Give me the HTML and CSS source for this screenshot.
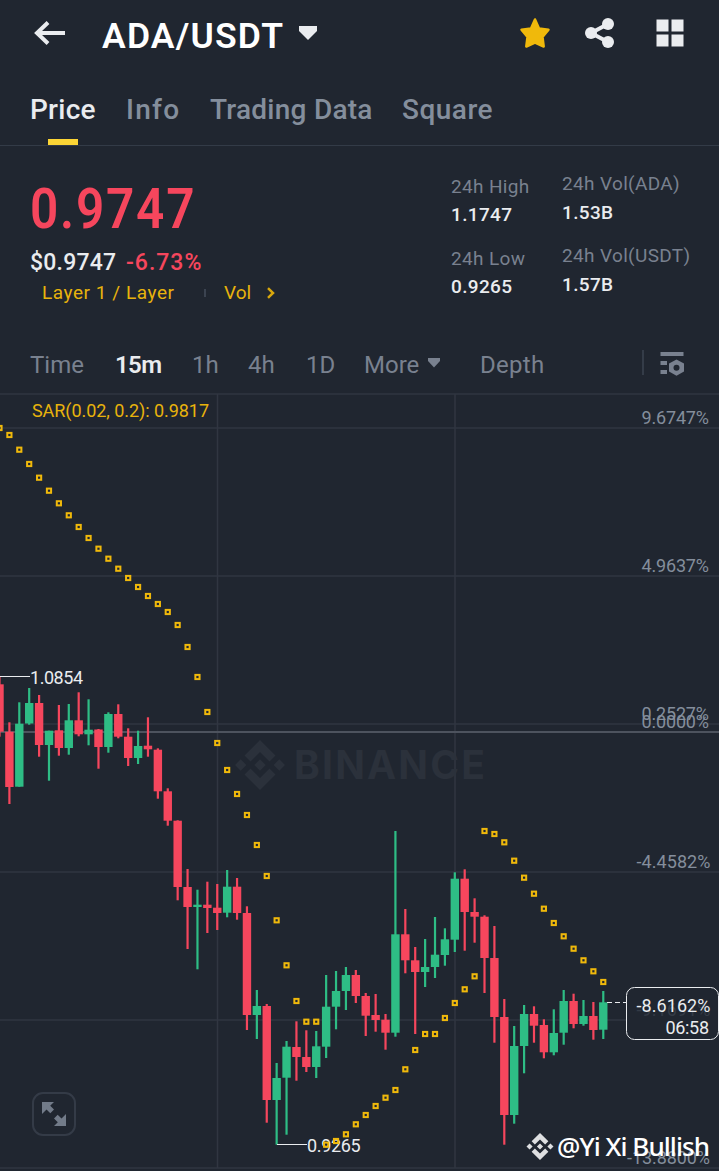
FILE: index.html
```html
<!DOCTYPE html>
<html lang="en">
<head>
<meta charset="utf-8">
<title>ADA/USDT</title>
<link rel="stylesheet" href="styles.css">
</head>
<body>
<header class="topbar">
  <svg class="back" width="32" height="26" viewBox="0 0 32 26"><path d="M31 13H3M14 2.500L3 13l11 10.500" fill="none" stroke="#eaecef" stroke-width="4"/></svg>
  <h1 class="pair">ADA/USDT</h1>
  <svg class="pair-arrow" width="18" height="14" viewBox="0 0 18 14"><path d="M0 0H18V5L9 14L0 5Z" fill="#eaecef"/></svg>
  <svg class="star" width="32" height="32" viewBox="0 0 32 32"><path d="M16 2.500L20 11.500L29.500 12.700L23.500 20L24.700 29.500L16 25.500L7.300 29.500L8.500 20L2.500 12.700L12 11.500Z" fill="#f0b90b" stroke="#f0b90b" stroke-width="2.500" stroke-linejoin="round"/></svg>
  <svg class="share" width="30" height="32" viewBox="0 0 30 32"><path d="M23 7L6 16l17 9" fill="none" stroke="#eaecef" stroke-width="4"/><g fill="#eaecef"><circle cx="23" cy="7" r="6"/><circle cx="6" cy="16" r="6"/><circle cx="23" cy="25" r="6"/></g></svg>
  <svg class="apps" width="28" height="28" viewBox="0 0 28 28"><path d="M.5.5h12v12H.5zM15.500.5h12v12h-12zM.5 15.500h12v12H.5zM15.500 15.500h12v12h-12z" fill="#eaecef"/></svg>
</header>
<nav class="tabs">
  <span class="tab tab-price active">Price</span>
  <span class="tab tab-info">Info</span>
  <span class="tab tab-data">Trading Data</span>
  <span class="tab tab-square">Square</span>
</nav>
<section class="summary">
  <div class="quote">
    <div class="last">0.9747</div>
    <div class="sub"><span class="usd">$0.9747</span><span class="change">-6.73%</span></div>
    <div class="tags"><span class="layer">Layer 1 / Layer</span><i class="tag-sep"></i><span class="vol">Vol</span><svg class="chev" width="8" height="12" viewBox="0 0 8 12"><path d="M1 1.200L6 6L1 10.800" fill="none" stroke="#d8a70d" stroke-width="2.500"/></svg></div>
  </div>
  <dl class="stats stats-range"><dt>24h High</dt><dd>1.1747</dd><dt>24h Low</dt><dd>0.9265</dd></dl>
  <dl class="stats stats-volume"><dt>24h Vol(ADA)</dt><dd>1.53B</dd><dt class="volume-usdt">24h Vol(USDT)</dt><dd>1.57B</dd></dl>
</section>
<nav class="intervals">
  <span class="iv iv-time">Time</span><span class="iv iv-15m selected">15m</span><span class="iv iv-1h">1h</span><span class="iv iv-4h">4h</span><span class="iv iv-1d">1D</span><span class="iv iv-more">More</span>
  <svg class="more-arrow" width="12" height="10" viewBox="0 0 12 10"><path d="M0 0H12V3L6 9.500L0 3Z" fill="#79818f"/></svg>
  <span class="iv iv-depth">Depth</span><i class="iv-sep"></i>
  <svg class="settings" width="24" height="25" viewBox="0 0 24 25"><path d="M.5 1h23v4H.5zM.5 10h6.500v4H.5zM.5 19h6.500v4H.5z" fill="#79818f"/><path fill-rule="evenodd" d="M16.500 8.500L24 12.500V20.500L16.500 24.800L9 20.500V12.500ZM16.500 13.700a3 3 0 100 6 3 3 0 000-6z" fill="#79818f"/></svg>
</nav>
<main class="chart">
  <svg class="plot" id="plot" width="719" height="778" viewBox="0 393 719 778">
    <g class="grid" id="grid"></g>
    <path class="zero" d="M0 732H719"/>
    <g class="watermark">
      <g transform="translate(235 740)"><path d="M25 0L40.500 15.500L34.500 21.500L25 12L15.500 21.500L9.500 15.500ZM9.500 34.500L15.500 28.500L25 38L34.500 28.500L40.500 34.500L25 50ZM0 25L5.700 19.300L11.400 25L5.700 30.700ZM38.600 25L44.300 19.300L50 25L44.300 30.700ZM19.300 25L25 19.300L30.700 25L25 30.700Z"/></g>
      <text x="294" y="779" textLength="191">BINANCE</text>
    </g>
    <g class="scale">
      <text x="641.500" y="424" textLength="67.500">9.6747%</text>
      <text x="641.500" y="572" textLength="67.500">4.9637%</text>
      <text x="641.500" y="720" textLength="67.500">0.2527%</text>
      <text x="641.500" y="728" textLength="67.500">0.0000%</text>
      <text x="636.500" y="868" textLength="74">-4.4582%</text>
      <text x="627" y="1164" textLength="83">-13.8800%</text>
    </g>
    <text class="sar-label" x="32" y="417" textLength="177">SAR(0.02, 0.2): 0.9817</text>
    <g id="candles"></g>
    <g class="marks"><path d="M0 676.500H30M277 1144.500H307"/><text x="30" y="684" textLength="53">1.0854</text><text x="307" y="1152" textLength="53.500">0.9265</text></g>
    <g class="sar" id="sar"></g>
    <path class="last-line" d="M607 1002.500H626"/>
    <g class="last-tag"><rect x="626.500" y="987.500" width="92" height="52" rx="8"/><text class="ghost" x="636.500" y="1016" textLength="74">-9.1691%</text><text x="636.500" y="1012" textLength="74">-8.6162%</text><text x="665.500" y="1034" textLength="43.500">06:58</text></g>
    <g class="expand"><rect x="33" y="1093" width="42" height="42" rx="10"/><path d="M42 1102H54L50.200 1105.800L54 1109.600L50.300 1113.300L46.500 1109.500L42 1114ZM66 1126H54L57.800 1122.200L54 1118.400L57.700 1114.700L61.500 1118.500L66 1114Z"/></g>
    <g class="author"><g transform="translate(526.500 1133) scale(.54)"><path d="M25 0L40.500 15.500L34.500 21.500L25 12L15.500 21.500L9.500 15.500ZM9.500 34.500L15.500 28.500L25 38L34.500 28.500L40.500 34.500L25 50ZM0 25L5.700 19.300L11.400 25L5.700 30.700ZM38.600 25L44.300 19.300L50 25L44.300 30.700ZM19.300 25L25 19.300L30.700 25L25 30.700Z"/></g><text x="557" y="1156" textLength="153">@Yi Xi Bullish</text></g>
  </svg>
</main>
<script src="chart.js"></script>
</body>
</html>
```

FILE: styles.css
```css
* { box-sizing: border-box; }
body { margin: 0; width: 719px; height: 1171px; overflow: hidden; background: #202630; color: #eaecef; font-family: Roboto, "Noto Sans", sans-serif; }
svg { display: block; flex: none; }
.topbar { display: flex; height: 68px; align-items: center; padding-left: 34px; }
.back { margin-top: -2px; }
.pair { margin: 3px 0 0 36px; width: 181px; font-size: 35.5px; line-height: 40px; font-weight: 600; letter-spacing: 1.2px; color: #fff; white-space: nowrap; }
.pair-arrow { margin-left: 16px; margin-top: -2px; }
.star { margin-left: 202px; margin-top: -2px; }
.share { margin-left: 34px; margin-top: -2px; }
.apps { margin-left: 41px; margin-top: -2px; }
.tabs { display: flex; height: 78px; padding-left: 30px; border-bottom: 1px solid #333b47; font-size: 28px; font-weight: 500; line-height: 34px; color: #848e9c; }
.tab { padding-top: 25px; white-space: nowrap; letter-spacing: .25px; }
.tab-price { width: 96px; background: linear-gradient(#fcd535, #fcd535) 18px 71px / 30px 6px no-repeat; }
.tab-info { width: 84px; letter-spacing: 1.3px; }
.tab-data { width: 192px; }
.tab-square { letter-spacing: .5px; }
.active { color: #eaecef; }
.summary { display: flex; height: 190px; }
.quote { width: 451px; padding-left: 30px; }
.last { margin-top: 32px; height: 62px; font-size: 56px; line-height: 62px; font-weight: 600; letter-spacing: 2px; color: #f6465d; transform: scaleX(.885); transform-origin: 0 50%; }
.sub { display: flex; height: 30px; margin-top: 8px; font-size: 23px; line-height: 30px; font-weight: 500; letter-spacing: .2px; }
.usd { width: 96px; }
.change { color: #f6465d; letter-spacing: 1px; }
.tags { display: flex; align-items: center; height: 26px; margin-top: 2px; padding-left: 12px; font-size: 19px; line-height: 26px; color: #e8b30c; }
.layer { width: 162px; letter-spacing: .55px; }
.tag-sep { width: 2px; height: 8px; background: #3b4350; }
.vol { margin-left: 18px; width: 43px; }
.stats { margin: 27px 0 0; width: 111px; font-size: 19px; line-height: 28px; letter-spacing: .35px; white-space: nowrap; }
.stats dt { color: #79818f; height: 28px; }
.stats dd { margin: 0 0 16px; height: 28px; font-weight: 500; }
.stats-volume { margin-top: 24px; }
.stats-volume dd { padding-top: 1px; }
.intervals { display: flex; height: 57px; padding: 14px 0 0 30px; font-size: 24px; line-height: 30px; color: #79818f; }
.iv-time { width: 85px; }
.iv-15m { width: 77px; letter-spacing: -.6px; }
.iv-1h { width: 56px; }
.iv-4h { width: 58px; }
.iv-1d { width: 58px; }
.iv-more { width: 64px; }
.more-arrow { margin-top: 8px; }
.iv-depth { margin-left: 40px; width: 162px; letter-spacing: .3px; }
.iv-sep { width: 2px; height: 25px; background: #343c48; }
.settings { margin: 1px 0 0 16px; }
.selected { color: #eaecef; font-weight: 600; }
.grid path { stroke: #2b313c; stroke-width: 2; }
.grid .vertical { stroke: #303641; stroke-width: 1.5; }
.zero { stroke: #4d535e; stroke-width: 2; }
.watermark { fill: #2b313b; font: 700 39px Inter, sans-serif; }
.scale { fill: #848e9c; font-size: 18px; }
.sar-label { fill: #e8b30c; font-size: 18px; }
.candle-up { fill: #2ebd85; }
.candle-down { fill: #f6465d; }
.marks { fill: #eaecef; font-size: 18px; }
.marks path { stroke: #eaecef; }
.sar rect { fill: none; stroke: #f0b90b; stroke-width: 2; }
.last-line { stroke: #eaecef; stroke-dasharray: 5 3; }
.last-tag { fill: #eaecef; font-size: 18px; }
.last-tag rect { fill: #202630; stroke: #eaecef; }
.last-tag .ghost { fill: #343b46; }
.expand rect { fill: none; stroke: #343b47; stroke-width: 2; }
.expand path { fill: #727b89; }
.author { fill: #dedfe1; }
.author text { fill: #fff; font: 500 26px "Noto Sans", sans-serif; }
```

FILE: chart.js
```js
const NS = "http://www.w3.org/2000/svg";
const X0 = -0.5, STEP = 9.898;

function add(parent, name, attrs) {
  const el = document.createElementNS(NS, name);
  for (const key in attrs) el.setAttribute(key, attrs[key]);
  document.getElementById(parent).appendChild(el);
}

[394, 428, 576, 724, 872, 1020, 1168].forEach(y => add("grid", "path", { d: `M0 ${y}H719` }));
[217.5, 455].forEach(x => add("grid", "path", { class: "vertical", d: `M${x} 394V1168` }));

// direction (1 = up), high, body top, body bottom, low
const candles = [
  [0,677,684.3,731.7,736.7],[0,722.3,731.7,787,804],[1,702.3,723.7,786.7,786.7],[1,688,703,723.5,724.7],
  [0,695,703,745,756.7],[1,730.7,730.7,745,780.7],[0,705,730.3,748,755.7],[1,704,720.3,748,754.7],
  [0,692.3,720.3,734.3,736.3],[1,699.3,729.7,734.3,745.3],[0,729,729.5,747,768.7],[1,712.3,714,747,752.7],
  [0,704.3,714,736.7,738.3],[0,728.3,736.7,758,766],[1,730.7,746,758,764],[0,717.3,745.7,749.3,756.7],
  [0,748.3,749.7,791.3,798.7],[0,788.3,791.3,820.7,825.7],[0,820.3,820.7,887,900.3],[0,869,887,907,949],
  [1,889.7,904.7,907,969.3],[0,881.7,904.7,908,933],[0,884,907.7,913,930],[1,870,886.7,912.7,917.3],
  [0,878,886.7,913,919.7],[0,906.3,913,1015,1030],[1,990,1006,1015,1039],[0,1004,1006,1100,1122.7],
  [1,1063,1078,1100,1144.7],[1,1041,1046.7,1077.7,1134.7],[0,1021.3,1047,1057,1080.7],[0,1030.3,1057,1067,1072],
  [1,1031,1046.3,1067,1078],[1,975,1006.7,1046.7,1058],[1,971,991,1006.7,1029.3],[1,967,975,991,1010],
  [0,970,975,996,1003],[0,993,996,1015.7,1036],[0,994,1015,1020,1031.7],[0,1014,1019.7,1032.7,1049.7],
  [1,831,934.3,1032.7,1036.7],[0,909,934.3,960.3,973.3],[0,947,960.3,972,1034],[1,939,967,972,987],
  [1,917,954.7,967,978],[1,928.3,939.3,955,965.7],[1,872.3,878.7,939.7,952],[0,869.3,878.7,912,950.7],
  [0,898.3,912,916.7,942.7],[0,915.3,916.7,958,993],[0,926,958,1017,1042.7],[0,999,1017,1115,1144.7],
  [1,1026,1046,1115,1123.7],[1,1005,1014,1046,1073.3],[0,1006.3,1014,1025.7,1042.7],[0,1019.3,1025,1052.3,1058.3],
  [1,1009.3,1033,1052.3,1055.3],[1,990,1001,1032.7,1044.7],[0,993.7,1001,1024,1028.3],[1,1000,1016,1024,1025.7],
  [0,1002,1016,1030,1039.7],[1,991,1002.3,1029.7,1039]
];
candles.forEach(([up, high, top, bottom, low], i) => {
  const x = X0 + i * STEP;
  const cls = up ? "candle-up" : "candle-down";
  add("candles", "rect", { class: cls, x: x - 1.1, y: high, width: 2.2, height: low - high });
  add("candles", "rect", { class: cls, x: x - 4.2, y: top, width: 8.4, height: bottom - top });
});

const sar = [
  428,435,449.7,464,477.7,490.7,503.3,515.3,527,538,548.7,558.7,568.7,578,587,596,604,612,625,647,
  677,712,743,770,794,815,845,876,920.3,965.3,1001,1021.7,1021.7,1144.7,1141,1134.3,1124.3,1115,1106,1097.7,
  1090,1069.3,1050,1034,1034,1018,1003,989.3,976.3,831,834,842.3,860.7,877.7,893.7,908.7,923,936.3,948.7,960.3,
  971.3,982
];
sar.forEach((y, i) => add("sar", "rect", { x: X0 + i * STEP - 2.1, y: y - 2.1, width: 4.2, height: 4.2 }));
```
